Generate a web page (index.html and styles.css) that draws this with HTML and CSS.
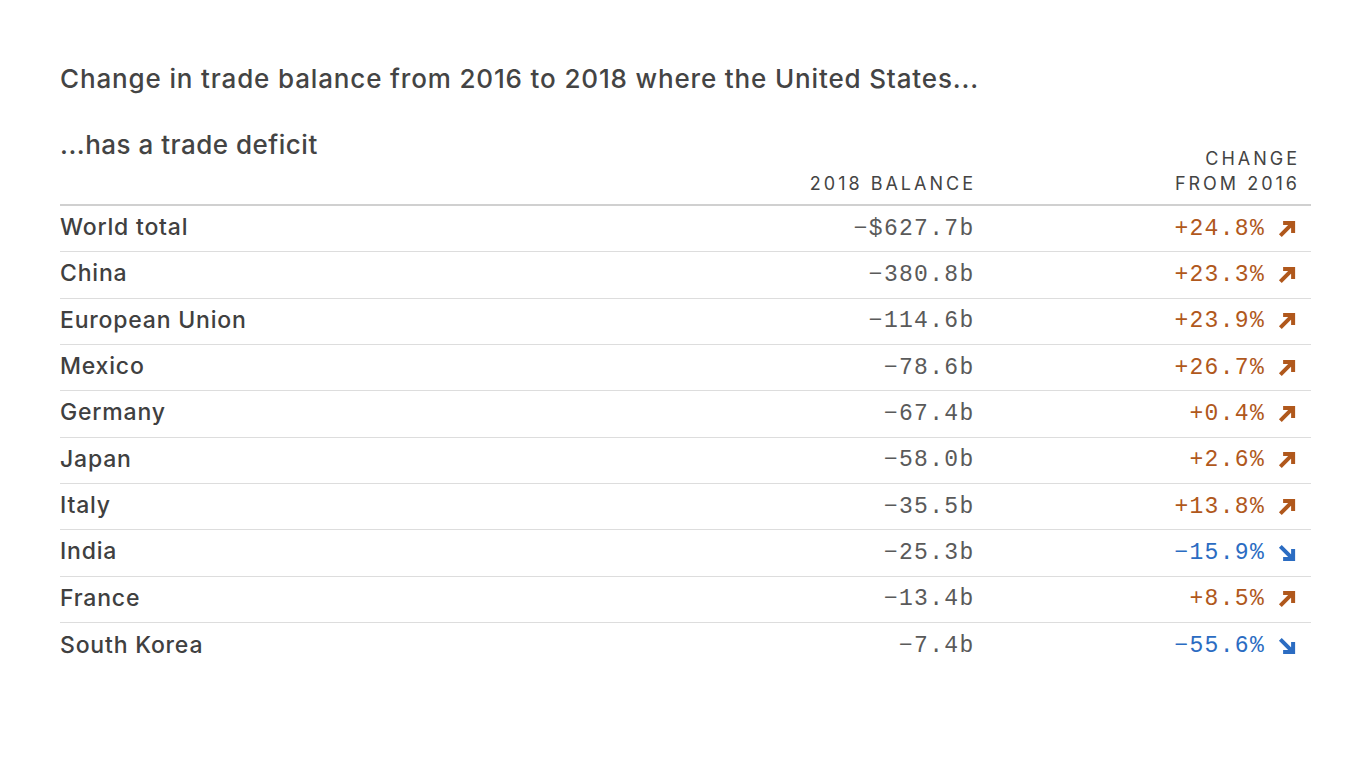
FILE: index.html
```html
<!DOCTYPE html>
<html>
<head>
<meta charset="utf-8">
<link rel="stylesheet" href="styles.css">
</head>
<body>
<div class="page">
  <h1 class="title">Change in trade balance from 2016 to 2018 where the United States...</h1>
  <div class="table">
    <div class="head">
      <div class="sub">...has a trade deficit</div>
      <div class="hcol">2018 BALANCE</div>
      <div class="hcol hchange">CHANGE<br>FROM 2016</div>
    </div>
    <div class="row"><div class="name">World total</div><div class="bal">−$627.7b</div><div class="chg up">+24.8%<svg class="arr" viewBox="0 0 18 18"><path d="M3 15 L14 4 M5.5 3.5 H14.5 V12.5" /></svg></div></div>
    <div class="row"><div class="name">China</div><div class="bal">−380.8b</div><div class="chg up">+23.3%<svg class="arr" viewBox="0 0 18 18"><path d="M3 15 L14 4 M5.5 3.5 H14.5 V12.5" /></svg></div></div>
    <div class="row"><div class="name">European Union</div><div class="bal">−114.6b</div><div class="chg up">+23.9%<svg class="arr" viewBox="0 0 18 18"><path d="M3 15 L14 4 M5.5 3.5 H14.5 V12.5" /></svg></div></div>
    <div class="row"><div class="name">Mexico</div><div class="bal">−78.6b</div><div class="chg up">+26.7%<svg class="arr" viewBox="0 0 18 18"><path d="M3 15 L14 4 M5.5 3.5 H14.5 V12.5" /></svg></div></div>
    <div class="row"><div class="name">Germany</div><div class="bal">−67.4b</div><div class="chg up">+0.4%<svg class="arr" viewBox="0 0 18 18"><path d="M3 15 L14 4 M5.5 3.5 H14.5 V12.5" /></svg></div></div>
    <div class="row"><div class="name">Japan</div><div class="bal">−58.0b</div><div class="chg up">+2.6%<svg class="arr" viewBox="0 0 18 18"><path d="M3 15 L14 4 M5.5 3.5 H14.5 V12.5" /></svg></div></div>
    <div class="row"><div class="name">Italy</div><div class="bal">−35.5b</div><div class="chg up">+13.8%<svg class="arr" viewBox="0 0 18 18"><path d="M3 15 L14 4 M5.5 3.5 H14.5 V12.5" /></svg></div></div>
    <div class="row"><div class="name">India</div><div class="bal">−25.3b</div><div class="chg down">−15.9%<svg class="arr" viewBox="0 0 18 18"><path d="M3 3 L14 14 M14.5 5.5 V14.5 H5.5" /></svg></div></div>
    <div class="row"><div class="name">France</div><div class="bal">−13.4b</div><div class="chg up">+8.5%<svg class="arr" viewBox="0 0 18 18"><path d="M3 15 L14 4 M5.5 3.5 H14.5 V12.5" /></svg></div></div>
    <div class="row"><div class="name">South Korea</div><div class="bal">−7.4b</div><div class="chg down">−55.6%<svg class="arr" viewBox="0 0 18 18"><path d="M3 3 L14 14 M14.5 5.5 V14.5 H5.5" /></svg></div></div>
  </div>
</div>
</body>
</html>
```
FILE: styles.css
```css
html, body {
  margin: 0;
  background: #ffffff;
}
.page {
  padding: 62px 55px 0 60px;
  font-family: "Inter", "Open Sans", sans-serif;
  color: #404040;
}
.title {
  margin: 0;
  font-size: 26px;
  font-weight: 500;
  line-height: 34px;
  letter-spacing: 0.85px;
  color: #444444;
}
.table {
  margin-top: 32px;
}
.head {
  display: grid;
  grid-template-columns: 1fr 300px 338px;
  border-bottom: 2px solid #d0d0d0;
  padding-bottom: 8px;
}
.sub {
  align-self: start;
  font-size: 26px;
  line-height: 34px;
  font-weight: 500;
  letter-spacing: 0.5px;
  color: #444444;
}
.hcol {
  align-self: end;
  text-align: right;
  font-size: 18px;
  line-height: 25px;
  letter-spacing: 3px;
  color: #444444;
  font-weight: 400;
  padding-top: 18px;
  margin-right: -3px;
}
.hchange {
  padding-right: 14px;
}
.row {
  display: grid;
  grid-template-columns: 1fr 300px 338px;
  align-items: center;
  height: 46.33px;
  box-sizing: border-box;
  border-bottom: 1px solid #dddddd;
}
.row:last-child {
  border-bottom: none;
}
.name {
  font-size: 23px;
  letter-spacing: 0.8px;
  color: #404040;
  font-weight: 500;
  padding-bottom: 3px;
}
.bal, .chg {
  font-family: "Liberation Mono", monospace;
  font-size: 23px;
  letter-spacing: 1.3px;
  text-align: right;
  color: #5a5a5a;
}
.bal {
  margin-right: -1.5px;
}
.chg {
  display: flex;
  justify-content: flex-end;
  align-items: center;
  padding-right: 14px;
}
.up { color: #b0581c; }
.down { color: #2b6cc2; }
.arr {
  width: 20px;
  height: 20px;
  margin-left: 12px;
  fill: none;
  stroke: currentColor;
  stroke-width: 3.6;
  stroke-linecap: butt;
}
```
